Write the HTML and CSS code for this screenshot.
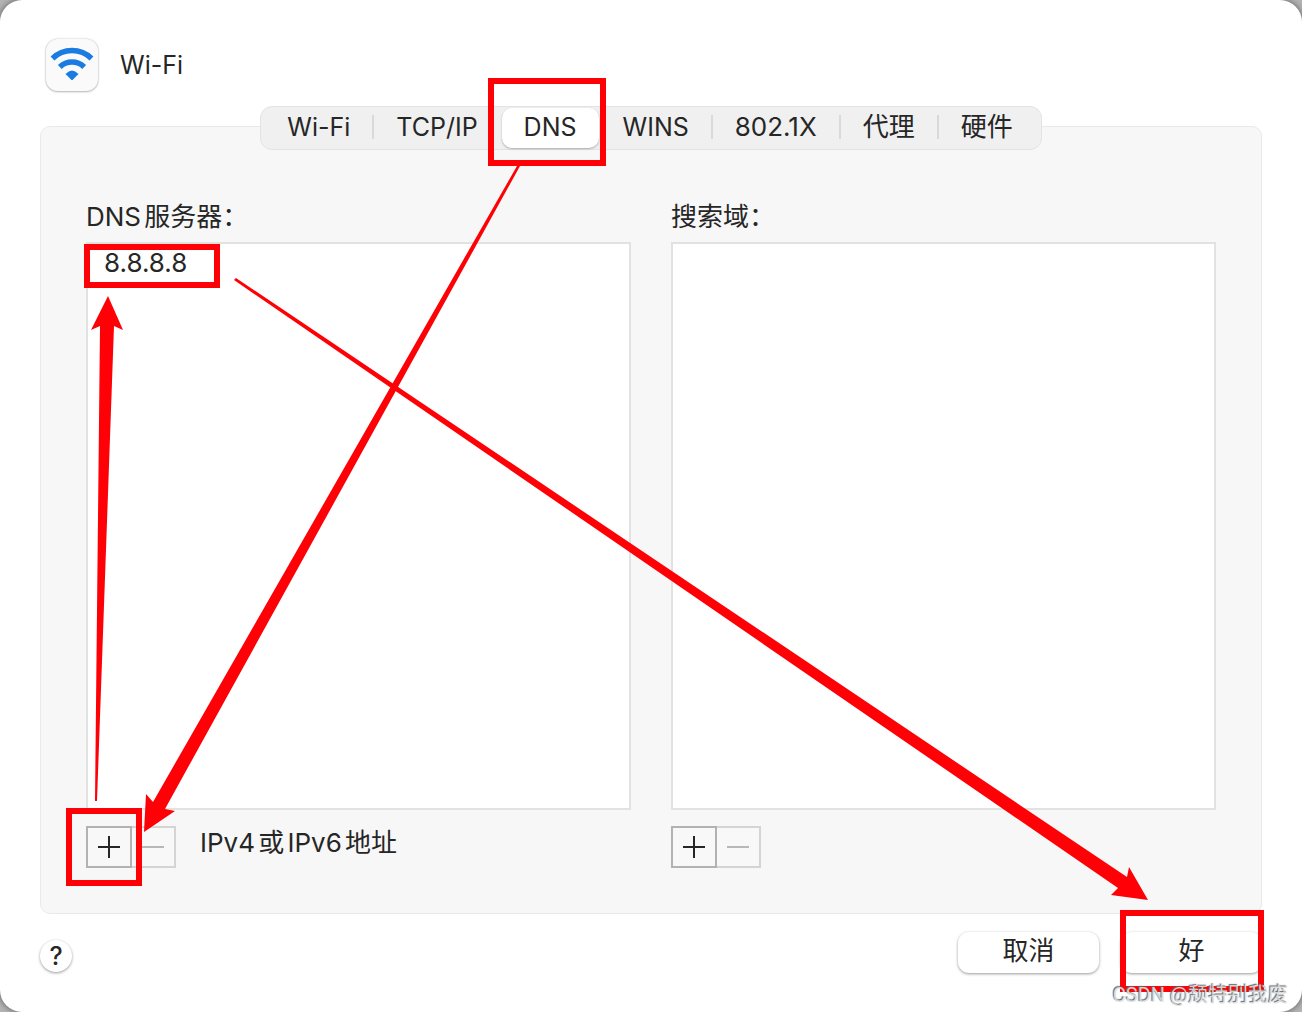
FILE: index.html
```html
<!DOCTYPE html>
<html lang="zh-CN">
<head>
    <meta charset="UTF-8">
    <meta name="viewport" content="width=device-width, initial-scale=1.0">
    <title>Wi-Fi</title>
    <link rel="stylesheet" href="styles.css">
</head>
<body>
    <main class="window">
        <header class="header">
            <div class="wifi-icon">
                <svg viewBox="0 0 52 52" aria-hidden="true">
                    <path d="M6.500 19.500 A28 28 0 0 1 45.500 19.500" fill="none" stroke="#1a7ce2" stroke-width="5.500"/>
                    <path d="M13.800 28 A17.500 17.500 0 0 1 38.200 28" fill="none" stroke="#1a7ce2" stroke-width="5.500"/>
                    <path d="M19.500 35 Q26 28 32.500 35 L27 40.500 Q26 41.500 25 40.500 Z" fill="#1a7ce2"/>
                </svg>
            </div>
            <h1>Wi-Fi</h1>
        </header>

        <nav class="tabs">
            <button type="button">Wi-Fi</button>
            <button type="button">TCP/IP</button>
            <button type="button" class="active">DNS</button>
            <button type="button">WINS</button>
            <button type="button" class="large">802.1X</button>
            <button type="button" class="large">代理</button>
            <button type="button" class="large">硬件</button>
        </nav>

        <section class="panel">
            <div class="column">
                <h2>DNS服务器：</h2>
                <ul class="list">
                    <li>8.8.8.8</li>
                </ul>
                <div class="list-footer">
                    <div class="list-buttons">
                        <button type="button" class="add" aria-label="添加 DNS 服务器"></button>
                        <button type="button" class="remove" aria-label="移除 DNS 服务器" disabled></button>
                    </div>
                    <span class="hint">IPv4或IPv6地址</span>
                </div>
            </div>
            <div class="column">
                <h2>搜索域：</h2>
                <ul class="list"></ul>
                <div class="list-footer">
                    <div class="list-buttons">
                        <button type="button" class="add" aria-label="添加搜索域"></button>
                        <button type="button" class="remove" aria-label="移除搜索域" disabled></button>
                    </div>
                </div>
            </div>
        </section>

        <footer class="footer">
            <button type="button" class="help">?</button>
            <div class="actions">
                <button type="button">取消</button>
                <button type="button">好</button>
            </div>
        </footer>

        <!-- Red frames and arrows: DNS tab, add button, address, OK -->
        <svg class="marks" width="1302" height="1012" viewBox="0 0 1302 1012" aria-hidden="true">
            <g fill="none" stroke="#ff0006" stroke-width="6">
                <rect x="491" y="81" width="112" height="82"/>
                <rect x="87" y="247" width="130" height="38"/>
                <rect x="69" y="811" width="70" height="72"/>
                <rect x="1123" y="913" width="138" height="76"/>
            </g>
            <g fill="#ff0006">
                <path d="M517 166 L520 166 L165 809 L175 811 L144 832 L146 794 L153 802 Z"/>
                <path d="M95 801 L97 801 L114 326 L123 330 L108 296 L91 330 L100 326 Z"/>
                <path d="M234 280 L236 278 L1127 877 L1129 867 L1148 900 L1111 895 L1118 888 Z"/>
            </g>
        </svg>
        <span class="watermark">CSDN @颓特别我废</span>
    </main>
</body>
</html>
```
FILE: styles.css
```css
* {
    box-sizing: border-box;
}

body {
    margin: 0;
    background-color: #b4b4b4;
    color: #262626;
    font-family: Inter, "Noto Sans CJK SC", sans-serif;
    font-size: 26px;
    line-height: 32px;
    text-autospace: normal;
}

button {
    padding: 0;
    border: none;
    background: none;
    color: inherit;
    font: inherit;
}

h1,
h2 {
    margin: 0;
    font-size: inherit;
    font-weight: 400;
}

h1 {
    font-size: 25px;
}

.window {
    position: relative;
    display: flex;
    flex-direction: column;
    min-height: 100vh;
    padding: 39px 40px;
    background-color: #fff;
    border-radius: 22px;
    box-shadow: 0 0 6px #555;
    overflow: hidden;
}

.header {
    display: flex;
    align-items: center;
    gap: 22px;
    padding-left: 6px;
}

.wifi-icon {
    width: 52px;
    height: 52px;
    border-radius: 12px;
    background-color: #fafafa;
    box-shadow: 0 0 2px #bbb, 0 1px 2px #bbb;
}

.wifi-icon svg {
    display: block;
}

.tabs {
    z-index: 1;
    display: flex;
    align-self: center;
    height: 44px;
    margin-top: 15px;
    margin-bottom: -24px;
    border: 1px solid #e3e3e3;
    border-radius: 12px;
    background-color: #f0f0f0;
    font-size: 25px;
}

.tabs button {
    display: flex;
    align-items: center;
    padding: 0 0 2px 22px;
}

.tabs .large {
    font-size: 26px;
}

.tabs button::after {
    content: "";
    width: 2px;
    height: 24px;
    margin-left: 22px;
    background-color: #d9d9d9;
}

.tabs button:first-child {
    padding-left: 26px;
}

.tabs button:last-child {
    padding-right: 28px;
}

.tabs button:last-child::after,
.tabs .active::after {
    display: none;
}

.tabs button:nth-child(2)::after {
    background: none;
}

.tabs .active {
    margin: 1px 2px 1px 0;
    padding-right: 22px;
    border-radius: 10px;
    background-color: #fff;
    box-shadow: 0 1px 2px #aaa;
}

.panel {
    flex: 1;
    display: grid;
    grid-template-columns: 1fr 1fr;
    gap: 40px;
    padding: 74px 45px 45px;
    border: 1px solid #e9e9e9;
    border-radius: 10px;
    background-color: #f7f7f7;
}

.column {
    display: flex;
    flex-direction: column;
}

.list {
    flex: 1;
    margin: 9px 0 16px;
    padding: 3px 16px;
    border: 2px solid #e2e2e2;
    background-color: #fff;
    list-style: none;
}

.list-footer {
    display: flex;
    gap: 24px;
}

.list-buttons {
    display: flex;
}

.list-buttons button {
    display: flex;
    align-items: center;
    justify-content: center;
    width: 46px;
    height: 42px;
    border: 2px solid #b2b2b2;
    background-color: #f8f8f8;
}

.list-buttons .remove {
    width: 44px;
    border-color: #d4d4d4;
    border-left: none;
}

/* plus and minus signs */
.add::before {
    content: "";
    width: 22px;
    height: 22px;
    background: linear-gradient(#262626, #262626) center / 22px 2px no-repeat,
                linear-gradient(#262626, #262626) center / 2px 22px no-repeat;
}

.remove::before {
    content: "";
    width: 22px;
    height: 2px;
    background-color: #b8b8b8;
}

.hint {
    padding-top: 1px;
}

.footer {
    display: flex;
    justify-content: space-between;
    padding-top: 18px;
}

.help {
    width: 32px;
    height: 32px;
    margin-top: 8px;
    border-radius: 50%;
    background-color: #fff;
    box-shadow: 0 1px 3px #999;
    font-size: 25px;
    font-weight: 500;
}

.actions {
    display: flex;
    gap: 22px;
}

.actions button {
    width: 141px;
    height: 41px;
    padding-bottom: 4px;
    border-radius: 11px;
    background-color: #fff;
    box-shadow: 0 1px 3px #999;
}

.marks {
    position: absolute;
    top: 0;
    left: 0;
    z-index: 2;
    pointer-events: none;
}

.watermark {
    position: absolute;
    right: 14px;
    bottom: 4px;
    z-index: 3;
    color: rgba(225, 225, 225, 0.9);
    font-family: Roboto, "Noto Sans CJK SC", sans-serif;
    font-size: 20px;
    line-height: 26px;
    text-autospace: no-autospace;
    text-shadow: -1px -1px 1px #666;
}
```
